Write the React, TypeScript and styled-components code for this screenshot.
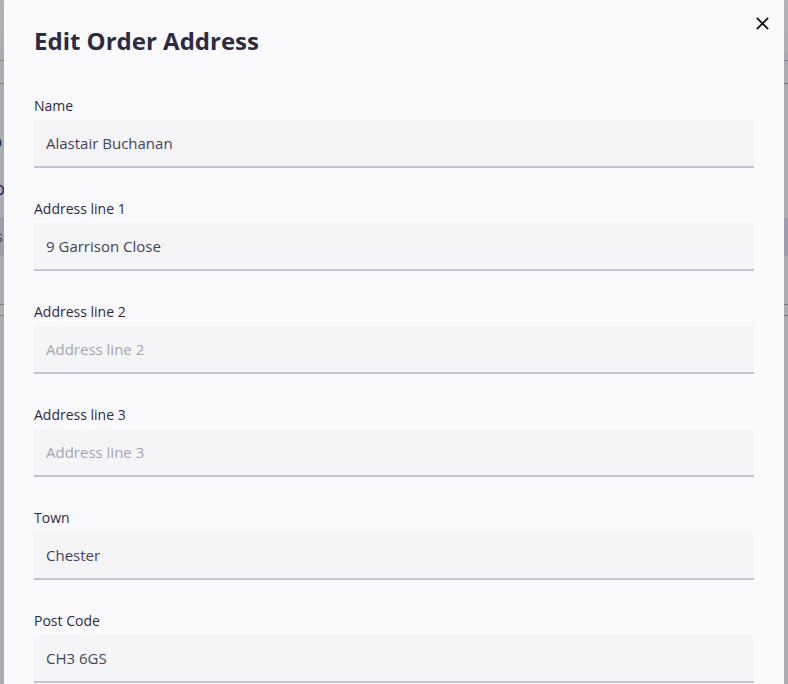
import styled, { createGlobalStyle } from 'styled-components';

const GlobalStyle = createGlobalStyle`
  html, body {
    margin: 0;
    padding: 0;
    height: 100%;
    overflow: hidden;
  }
  body {
    font-family: 'Open Sans', 'Noto Sans', sans-serif;
    background: #ffffff;
  }
`;

const Page = styled.div`
  height: 684px;
  background: #f3f3f6;
  position: relative;
  overflow: hidden;
`;

const PageHeader = styled.div`
  height: 60px;
  border-bottom: 1px solid #b9b9c4;
  background: linear-gradient(#fff, #f3f3f6);
`;

const PageRule = styled.div<{ gap: number }>`
  margin-top: ${p => p.gap}px;
  border-top: 1px solid #a9a9b4;
`;

const PageHeading = styled.div`
  margin: 44px 0 0 -14px;
  font-size: 26px;
  font-weight: 700;
  color: #1b1f5e;
`;

const PageSub = styled.div`
  margin: 12px 0 0 -6px;
  font-size: 18px;
  color: #2a2f7a;
`;

const PageBand = styled.div`
  margin-top: 18px;
  height: 38px;
  background: #dcdcee;
  font-size: 14px;
  line-height: 38px;
  color: #4a4f80;
  text-indent: -4px;
`;

const Overlay = styled.div`
  position: fixed;
  inset: 0;
  background: rgba(20, 20, 30, 0.32);
`;

const Modal = styled.div`
  position: fixed;
  top: 0;
  left: 4px;
  width: 780px;
  height: 760px;
  box-sizing: border-box;
  background: #fafafd;
  padding: 25px 30px 0;
`;

const CloseButton = styled.button`
  position: absolute;
  top: 11px;
  right: 10px;
  width: 24px;
  height: 24px;
  border: 0;
  padding: 0;
  background: none;
  display: flex;
  align-items: center;
  justify-content: center;
  cursor: pointer;
`;

const Title = styled.h2`
  margin: 0 0 39px;
  font-size: 24px;
  line-height: 32px;
  font-weight: 700;
  color: #2d2a44;
`;

const Form = styled.div`
  display: flex;
  flex-direction: column;
  gap: 31px;
`;

const Field = styled.label`
  display: flex;
  flex-direction: column;
  gap: 4px;
`;

const Label = styled.span`
  font-size: 14px;
  line-height: 20px;
  font-weight: 500;
  color: #2d2a44;
`;

const Input = styled.input`
  height: 48px;
  box-sizing: border-box;
  border: 0;
  border-bottom: 2px solid #c4c3d6;
  background: #f5f5f8;
  padding: 0 12px;
  font-family: inherit;
  font-size: 15px;
  font-weight: 400;
  color: #44425a;
  outline: none;

  &::placeholder {
    color: #a4a3b2;
  }
`;

const fields = [
  { label: 'Name', value: 'Alastair Buchanan' },
  { label: 'Address line 1', value: '9 Garrison Close' },
  { label: 'Address line 2', value: '' },
  { label: 'Address line 3', value: '' },
  { label: 'Town', value: 'Chester' },
  { label: 'Post Code', value: 'CH3 6GS' }
];

export default function App() {
  return (
    <>
      <GlobalStyle />
      <Page>
        <PageHeader />
        <PageRule gap={22} />
        <PageHeading>Pick</PageHeading>
        <PageSub>bb</PageSub>
        <PageBand>s</PageBand>
        <PageRule gap={48} />
        <PageRule gap={10} />
      </Page>
      <Overlay />
      <Modal>
        <CloseButton aria-label="Close">
          <svg width="15" height="15" viewBox="0 0 16 16">
            <path d="M2 2L14 14M14 2L2 14" stroke="#111" strokeWidth="2" />
          </svg>
        </CloseButton>
        <Title>Edit Order Address</Title>
        <Form>
          {fields.map(f => (
            <Field key={f.label}>
              <Label>{f.label}</Label>
              <Input defaultValue={f.value} placeholder={f.label} />
            </Field>
          ))}
        </Form>
      </Modal>
    </>
  );
}
